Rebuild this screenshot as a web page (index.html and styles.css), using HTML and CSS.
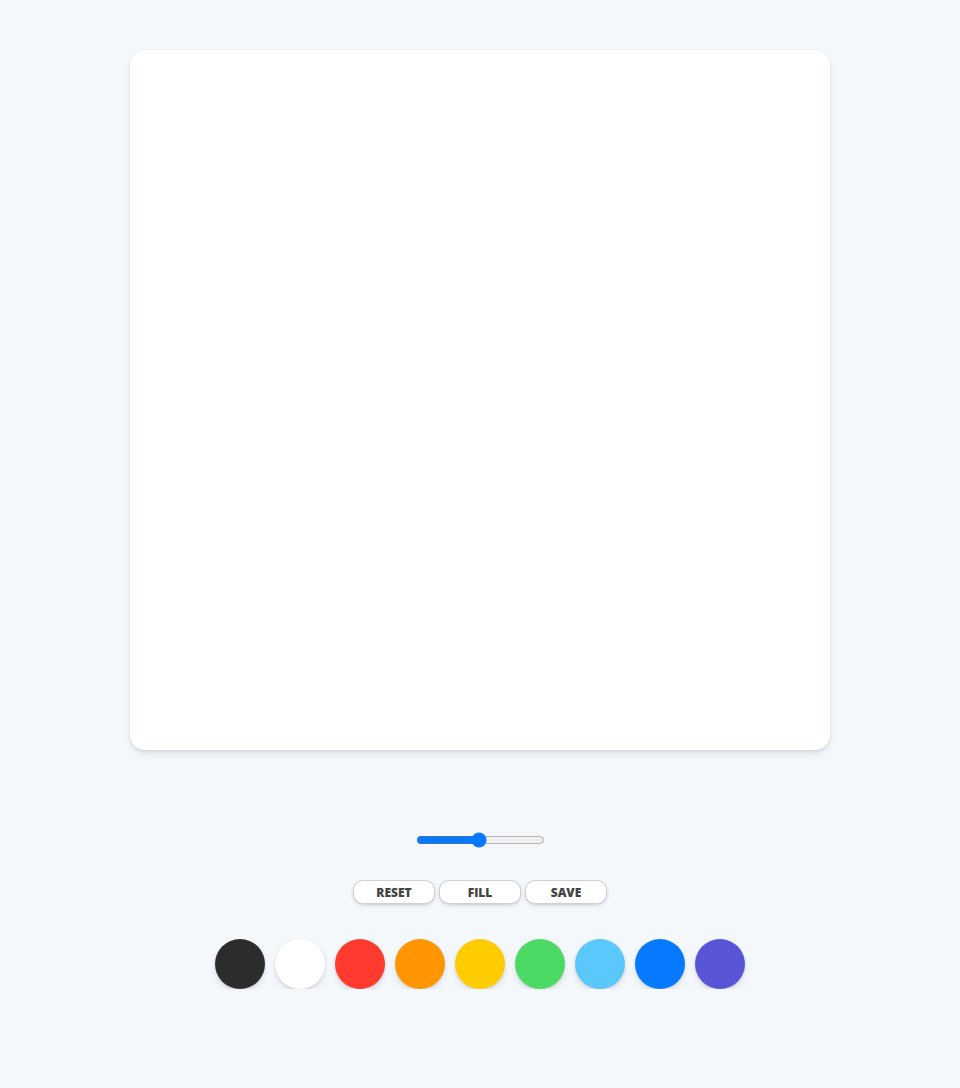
FILE: index.html
```html
<!DOCTYPE html>
<html lang="en">
<head>
    <meta charset="UTF-8">
    <meta name="viewport" content="width=device-width, initial-scale=1.0">
    <title>Paint</title>
    <link rel="stylesheet" href="styles.css">
</head>
<body>
    <div class="board">
        <div class="canvas" id="canvas"></div>

        <div class="tools">
            <input type="range" min="1" max="50" value="25" id="size">

            <div class="actions">
                <button class="btn" id="reset">Reset</button>
                <button class="btn" id="fill">Fill</button>
                <button class="btn" id="save">Save</button>
            </div>

            <div class="colors">
                <span class="color" style="background: #2c2c2c;"></span>
                <span class="color" style="background: #ffffff;"></span>
                <span class="color" style="background: #ff3b30;"></span>
                <span class="color" style="background: #ff9500;"></span>
                <span class="color" style="background: #ffcc00;"></span>
                <span class="color" style="background: #4cd964;"></span>
                <span class="color" style="background: #5ac8fa;"></span>
                <span class="color" style="background: #0579ff;"></span>
                <span class="color" style="background: #5856d6;"></span>
            </div>
        </div>
    </div>
</body>
</html>
```

FILE: styles.css
```css
* {
    box-sizing: border-box;
}

body {
    margin: 0;
    background-color: #f5f8fb;
    font-family: "Open Sans", sans-serif;
}

.board {
    display: flex;
    flex-direction: column;
    align-items: center;
    padding-top: 50px;
}

.canvas {
    width: 700px;
    height: 700px;
    background: white;
    border-radius: 15px;
    box-shadow: 0 4px 6px rgba(50, 50, 93, 0.11), 0 1px 3px rgba(0, 0, 0, 0.08);
}

.tools {
    display: flex;
    flex-direction: column;
    align-items: center;
    margin-top: 80px;
}

input[type="range"] {
    width: 129px;
    height: 16px;
    margin: 2px;
    accent-color: #0579ff;
}

.actions {
    display: flex;
    gap: 4px;
    margin-top: 30px;
}

.btn {
    width: 82px;
    height: 24px;
    padding: 0;
    background: white;
    border: 1px solid #cfcfd4;
    border-radius: 10px;
    box-shadow: 0 2px 4px rgba(50, 50, 93, 0.11), 0 1px 2px rgba(0, 0, 0, 0.08);
    font-family: "Open Sans", sans-serif;
    font-size: 12px;
    font-weight: 800;
    color: #444;
    text-transform: uppercase;
    cursor: pointer;
}

.colors {
    display: flex;
    gap: 10px;
    margin-top: 35px;
}

.color {
    width: 50px;
    height: 50px;
    border-radius: 50%;
    box-shadow: 0 4px 6px rgba(50, 50, 93, 0.11), 0 1px 3px rgba(0, 0, 0, 0.08);
    cursor: pointer;
}
```
